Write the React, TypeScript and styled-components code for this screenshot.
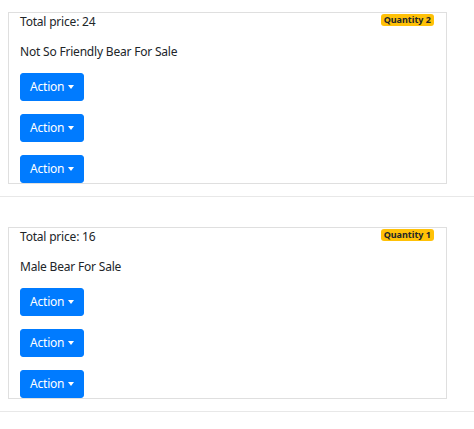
import React from "react";
import styled, { createGlobalStyle } from "styled-components";

const Global = createGlobalStyle`
  html, body { margin: 0; padding: 0; background: #fff; }
  body {
    font-family: "Segoe UI", "Noto Sans", "Liberation Sans", Arial, sans-serif;
    font-size: 12px;
    letter-spacing: -0.2px;
    line-height: 18px;
    color: #212529;
  }
  * { box-sizing: border-box; }
`;

const Page = styled.div`
  display: flex;
  flex-direction: column;
  padding-top: 12px;
`;

const Section = styled.section<{ $gapTop: number }>`
  display: flex;
  flex-direction: column;
  margin-top: ${(p) => p.$gapTop}px;
`;

const Card = styled.div`
  margin-left: 8px;
  width: 439px;
  border: 1px solid #dfdfdf;
  padding: 0 12px 0 11px;
  display: flex;
  flex-direction: column;
  align-items: flex-start;
`;

const HeaderRow = styled.div`
  align-self: stretch;
  display: flex;
  justify-content: space-between;
  align-items: flex-start;
  margin-bottom: 12px;
`;

const Title = styled.span`
  font-size: 12px;
  line-height: 18px;
`;

const Badge = styled.span`
  margin-top: 1px;
  background: #ffc107;
  color: #212529;
  font-weight: 700;
  font-size: 9px;
  letter-spacing: 0;
  line-height: 12px;
  padding: 0 3px;
  border-radius: 3px;
  white-space: nowrap;
`;

const Description = styled.p`
  margin: 0 0 12px 0;
  font-size: 12px;
  line-height: 18px;
`;

const ActionButton = styled.button<{ $last?: boolean }>`
  font-family: inherit;
  font-size: 12px;
  letter-spacing: -0.2px;
  line-height: 18px;
  height: 28px;
  padding: 4px 9px;
  margin-bottom: ${(p) => (p.$last ? 0 : 13)}px;
  color: #fff;
  background: #007bff;
  border: 1px solid #007bff;
  border-radius: 3px;
  display: inline-flex;
  align-items: center;
  cursor: pointer;

  &::after {
    content: "";
    display: inline-block;
    margin-left: 4px;
    margin-top: -1px;
    border-top: 4px solid #fff;
    border-left: 3.5px solid transparent;
    border-right: 3.5px solid transparent;
  }
`;

const Divider = styled.hr`
  margin: 12px 0 0 0;
  border: 0;
  border-top: 1px solid #e8e8e8;
  width: 100%;
`;

const items = [
  { price: 24, qty: 2, name: "Not So Friendly Bear For Sale" },
  { price: 16, qty: 1, name: "Male Bear For Sale" },
];

export default function App() {
  return (
    <>
      <Global />
      <Page>
        {items.map((it, i) => (
          <Section key={i} $gapTop={i === 0 ? 0 : 30}>
            <Card>
              <HeaderRow>
                <Title>Total price: {it.price}</Title>
                <Badge>Quantity {it.qty}</Badge>
              </HeaderRow>
              <Description>{it.name}</Description>
              <ActionButton>Action</ActionButton>
              <ActionButton>Action</ActionButton>
              <ActionButton $last>Action</ActionButton>
            </Card>
            <Divider />
          </Section>
        ))}
      </Page>
    </>
  );
}
